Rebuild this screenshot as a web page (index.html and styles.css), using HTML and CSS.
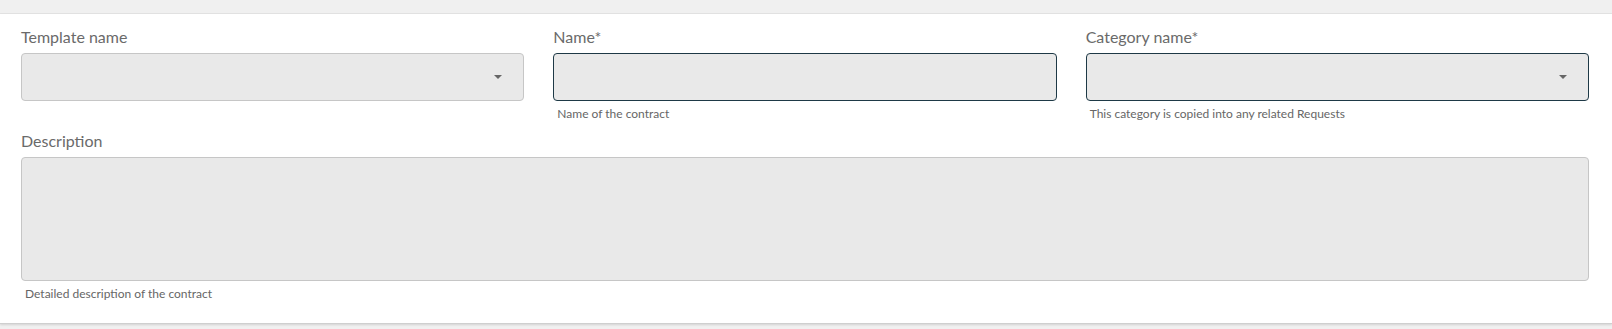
FILE: index.html
```html
<!DOCTYPE html>
<html>
<head>
<meta charset="utf-8">
<link rel="stylesheet" href="styles.css">
</head>
<body>
<div class="topband"></div>
<div class="panel">
  <div class="row three">
    <div class="field">
      <label class="label">Template name</label>
      <div class="box select"><span class="caret"></span></div>
    </div>
    <div class="field">
      <label class="label">Name*</label>
      <div class="box focus"></div>
      <div class="hint">Name of the contract</div>
    </div>
    <div class="field">
      <label class="label">Category name*</label>
      <div class="box select focus"><span class="caret"></span></div>
      <div class="hint">This category is copied into any related Requests</div>
    </div>
  </div>
  <div class="row">
    <div class="field">
      <label class="label">Description</label>
      <div class="box area"></div>
      <div class="hint">Detailed description of the contract</div>
    </div>
  </div>
</div>
</body>
</html>
```
FILE: styles.css
```css
html, body {
  margin: 0;
  padding: 0;
}
body {
  background: #f0f0f0;
  font-family: Lato, "Open Sans", "DejaVu Sans", sans-serif;
  height: 329px;
  overflow: hidden;
}
.topband {
  height: 13px;
  background: #f0f0f0;
  border-bottom: 1px solid #e3e3e3;
}
.panel {
  background: #fff;
  padding: 13px 23px 22px 21px;
  height: 274px;
  box-sizing: content-box;
  border-bottom: 1px solid #cfcfcf;
  box-shadow: 0 1px 2px rgba(0,0,0,0.12);
}
.row.three {
  display: grid;
  grid-template-columns: 1fr 1fr 1fr;
  column-gap: 29px;
  height: 93px;
  margin-bottom: 11px;
}
.field {
  display: flex;
  flex-direction: column;
}
.label {
  font-size: 16px;
  line-height: 20px;
  color: #6a6a6a;
  margin-bottom: 6px;
}
.box {
  height: 48px;
  box-sizing: border-box;
  background: #e9e9e9;
  border: 1px solid #c6c6c6;
  border-radius: 4px;
  position: relative;
}
.box.focus {
  border-color: #1e3946;
}
.box.area {
  height: 124px;
}
.select {
  display: flex;
  align-items: center;
  justify-content: flex-end;
  padding-right: 21px;
}
.caret {
  width: 0;
  height: 0;
  border-left: 4px solid transparent;
  border-right: 4px solid transparent;
  border-top: 4px solid #666;
}
.hint {
  font-size: 12px;
  line-height: 14px;
  color: #666;
  padding-left: 4px;
  margin-top: 6px;
}
```
